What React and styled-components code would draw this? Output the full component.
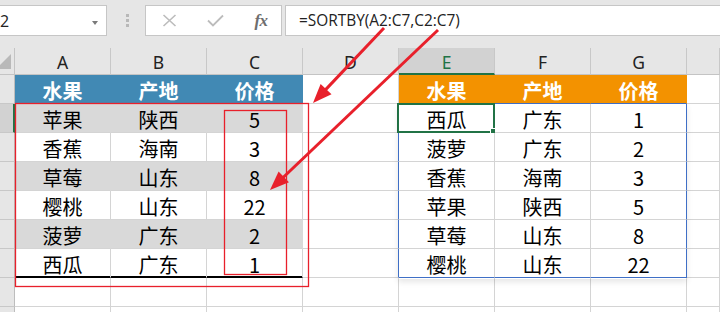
import React from "react";
import styled, { createGlobalStyle } from "styled-components";

const GlobalStyle = createGlobalStyle`
  html, body {
    margin: 0;
    padding: 0;
    background: #ffffff;
    overflow: hidden;
  }
  #root {
    width: 720px;
    height: 312px;
  }
`;

const GRID = "#d4d4d4";
const BLUE_HEAD = "#4189b4";
const ORANGE_HEAD = "#f39200";
const BAND = "#d9d9d9";
const TABLE_EDGE = "#3f6fc6";
const EXCEL_GREEN = "#217346";
const ANNOT_RED = "#e8202b";

const Page = styled.div`
  position: relative;
  width: 720px;
  height: 312px;
  overflow: hidden;
  background: #ffffff;
`;

/* ---------- formula bar ---------- */

const FormulaBar = styled.div`
  display: flex;
  align-items: flex-start;
  height: 48px;
  padding-top: 5px;
  box-sizing: border-box;
  background: #e6e6e6;
`;

const NameBox = styled.div`
  position: relative;
  display: flex;
  align-items: center;
  width: 107px;
  height: 31px;
  box-sizing: border-box;
  background: #fff;
  border: 1px solid #c6c6c6;
  border-left: none;
  font-family: "Open Sans", "Noto Sans", sans-serif;
  font-size: 16px;
  color: #222;
  padding-left: 0;
`;

const DropCaret = styled.span`
  position: absolute;
  right: 8px;
  top: 15px;
  width: 0;
  height: 0;
  border-left: 3.5px solid transparent;
  border-right: 3.5px solid transparent;
  border-top: 4px solid #7a7a7a;
`;

const Grip = styled.div`
  display: flex;
  flex-direction: column;
  gap: 2px;
  margin: 9px 16px 0 19px;
`;

const GripDot = styled.span`
  width: 3px;
  height: 3px;
  background: #b8b8b8;
`;

const FxBox = styled.div`
  display: flex;
  align-items: center;
  width: 137px;
  height: 31px;
  box-sizing: border-box;
  background: #fff;
  border: 1px solid #c6c6c6;
  padding-left: 14px;
`;

const FxIcon = styled.span`
  display: flex;
  align-items: center;
  justify-content: center;
  width: ${(p) => p.$w}px;
  color: ${(p) => p.$color || "#bcbcbc"};
`;

const FxLabel = styled.span`
  font-family: "Liberation Serif", serif;
  font-style: italic;
  font-weight: bold;
  font-size: 17px;
  color: #6e6e6e;
  letter-spacing: -0.5px;
`;

const FormulaInput = styled.div`
  flex: 1;
  display: flex;
  align-items: center;
  height: 31px;
  box-sizing: border-box;
  margin-left: 3px;
  background: #fff;
  border: 1px solid #c6c6c6;
  border-right: none;
  padding-left: 13px;
  font-family: "Open Sans", "Noto Sans", sans-serif;
  font-size: 15.4px;
  color: #222;
`;

/* ---------- sheet grid ---------- */

const Sheet = styled.div`
  display: grid;
  grid-template-columns: 15px repeat(7, 96px) 1fr;
  grid-template-rows: 27px repeat(9, 29px);
  height: 264px;
  overflow: hidden;
`;

const Corner = styled.div`
  position: relative;
  background: #e6e6e6;
  border-right: 1px solid #c4c4c4;
  border-bottom: 1px solid #c4c4c4;
  box-sizing: border-box;
`;

const ColHead = styled.div`
  display: flex;
  align-items: center;
  justify-content: center;
  box-sizing: border-box;
  background: ${(p) => (p.$active ? "#d2d2d2" : "#e6e6e6")};
  border-right: 1px solid #c8c8c8;
  border-bottom: ${(p) => (p.$active ? `2px solid ${EXCEL_GREEN}` : "1px solid #c4c4c4")};
  font-family: "Noto Sans", "Open Sans", sans-serif;
  font-size: 17.5px;
  color: ${(p) => (p.$active ? EXCEL_GREEN : "#222")};
  padding-top: 2px;
`;

const RowHead = styled.div`
  box-sizing: border-box;
  background: ${(p) => (p.$active ? "#d2d2d2" : "#e6e6e6")};
  border-right: ${(p) => (p.$active ? `2px solid ${EXCEL_GREEN}` : "1px solid #bdbdbd")};
  border-bottom: 1px solid #c8c8c8;
`;

const Cell = styled.div`
  position: relative;
  display: flex;
  align-items: center;
  justify-content: center;
  box-sizing: border-box;
  background: ${(p) => p.$bg};
  border-right: 1px solid ${(p) => p.$br};
  border-bottom: 1px solid ${(p) => p.$bb};
  box-shadow: ${(p) => (p.$thick ? "inset 0 -1px 0 #000" : "none")};
  font-family: "Noto Sans CJK SC", "Noto Sans", sans-serif;
  font-size: 20px;
  font-weight: ${(p) => (p.$bold ? 700 : 400)};
  color: ${(p) => p.$color};
  padding-top: 3px;
  line-height: 1;
`;

const Selection = styled.div`
  position: absolute;
  left: -2px;
  top: -1px;
  right: -1px;
  bottom: -1px;
  border: 2px solid ${EXCEL_GREEN};
  pointer-events: none;
`;

const FillHandle = styled.span`
  position: absolute;
  right: -4px;
  bottom: -4px;
  width: 5px;
  height: 5px;
  background: ${EXCEL_GREEN};
  border: 1px solid #fff;
`;

/* soft drop shadow under the sorted result block E2:G7 */
const SpillShadow = styled.div`
  position: absolute;
  left: 398px;
  top: 104px;
  width: 289px;
  height: 175px;
  box-shadow: 0 3px 6px rgba(0, 0, 0, 0.1);
  pointer-events: none;
`;

const Annotations = styled.svg`
  position: absolute;
  left: 0;
  top: 0;
  pointer-events: none;
`;

/* ---------- data ---------- */

const HEADERS = ["水果", "产地", "价格"];
const FRUITS = [
  ["苹果", "陕西", 5],
  ["香蕉", "海南", 3],
  ["草莓", "山东", 8],
  ["樱桃", "山东", 22],
  ["菠萝", "广东", 2],
  ["西瓜", "广东", 1],
];
const SORTED = [...FRUITS].sort((a, b) => a[2] - b[2]);
const LETTERS = ["A", "B", "C", "D", "E", "F", "G", ""];

function cellProps(row, col) {
  // row: 1-based sheet row, col: 0 = A ... 7 = H
  const inLeft = col <= 2;
  const inRight = col >= 4 && col <= 6;
  const dataRow = row >= 2 && row <= 7;
  const p = { $bg: "#fff", $br: GRID, $bb: GRID, $color: "#000", text: "" };

  if (row === 1 && inLeft) {
    p.$bg = BLUE_HEAD;
    p.$br = BLUE_HEAD;
    p.$bb = "#1b1b1b";
    p.$color = "#fff";
    p.$bold = true;
    p.text = HEADERS[col];
  } else if (row === 1 && inRight) {
    p.$bg = ORANGE_HEAD;
    p.$br = ORANGE_HEAD;
    p.$bb = TABLE_EDGE;
    p.$color = "#fff";
    p.$bold = true;
    p.text = HEADERS[col - 4];
  } else if (dataRow && inLeft) {
    const banded = row % 2 === 0;
    if (banded) {
      p.$bg = BAND;
      p.$br = BAND;
    }
    p.text = FRUITS[row - 2][col];
    if (row === 7) {
      p.$bb = "#000";
      p.$thick = true;
    }
  } else if (dataRow && inRight) {
    p.text = SORTED[row - 2][col - 4];
    if (col === 6) p.$br = TABLE_EDGE;
    if (row === 7) p.$bb = TABLE_EDGE;
  }
  if (dataRow && col === 3) p.$br = TABLE_EDGE;
  return p;
}

function Arrow({ from, to, head = 19, half = 7.5 }) {
  const dx = to[0] - from[0];
  const dy = to[1] - from[1];
  const len = Math.hypot(dx, dy);
  const ux = dx / len;
  const uy = dy / len;
  const bx = to[0] - ux * head;
  const by = to[1] - uy * head;
  const nx = -uy;
  const ny = ux;
  const pts = [
    [to[0], to[1]],
    [bx + nx * half, by + ny * half],
    [bx - nx * half, by - ny * half],
  ]
    .map((q) => q.join(","))
    .join(" ");
  return (
    <g>
      <line
        x1={from[0]}
        y1={from[1]}
        x2={bx + ux * 2}
        y2={by + uy * 2}
        stroke={ANNOT_RED}
        strokeWidth="3"
      />
      <polygon points={pts} fill={ANNOT_RED} />
    </g>
  );
}

export default function App() {
  const rows = [];
  for (let r = 1; r <= 9; r++) {
    rows.push(<RowHead key={`rh${r}`} $active={r === 2} />);
    for (let c = 0; c < 8; c++) {
      const { text, ...p } = cellProps(r, c);
      rows.push(
        <Cell key={`c${r}-${c}`} {...p}>
          {text}
          {r === 2 && c === 4 && (
            <Selection>
              <FillHandle />
            </Selection>
          )}
        </Cell>
      );
    }
  }

  return (
    <Page lang="zh-CN">
      <GlobalStyle />
      <FormulaBar>
        <NameBox>
          2
          <DropCaret />
        </NameBox>
        <Grip>
          <GripDot />
          <GripDot />
          <GripDot />
        </Grip>
        <FxBox>
          <FxIcon $w={18}>
            <svg width="15" height="13" viewBox="0 0 15 13">
              <path d="M1.5 1 L13.5 12 M13.5 1 L1.5 12" stroke="currentColor" strokeWidth="1.6" fill="none" />
            </svg>
          </FxIcon>
          <FxIcon $w={28} />
          <FxIcon $w={18}>
            <svg width="17" height="13" viewBox="0 0 17 13">
              <path d="M1 6.5 L6 11.5 L16 1.5" stroke="currentColor" strokeWidth="1.8" fill="none" />
            </svg>
          </FxIcon>
          <FxIcon $w={28} />
          <FxIcon $w={18}>
            <FxLabel>fx</FxLabel>
          </FxIcon>
        </FxBox>
        <FormulaInput>=SORTBY(A2:C7,C2:C7)</FormulaInput>
      </FormulaBar>

      <Sheet>
        <Corner>
          <svg width="15" height="27" viewBox="0 0 15 27" style={{ position: "absolute", left: 0, top: 0 }}>
            <polygon points="11,6 11,21 0,21 0,17" fill="#b9b9b9" />
          </svg>
        </Corner>
        {LETTERS.map((l, i) => (
          <ColHead key={`h${i}`} $active={l === "E"}>
            {l}
          </ColHead>
        ))}
        {rows}
      </Sheet>

      <SpillShadow />

      <Annotations width="720" height="312" viewBox="0 0 720 312">
        <rect x="15.5" y="103.5" width="293" height="183" fill="none" stroke={ANNOT_RED} strokeWidth="1.3" />
        <rect x="224.5" y="110.5" width="62" height="164" fill="none" stroke={ANNOT_RED} strokeWidth="1.3" />
        <Arrow from={[384, 28]} to={[313, 103]} />
        <Arrow from={[438, 30]} to={[270, 190]} />
      </Annotations>
    </Page>
  );
}
